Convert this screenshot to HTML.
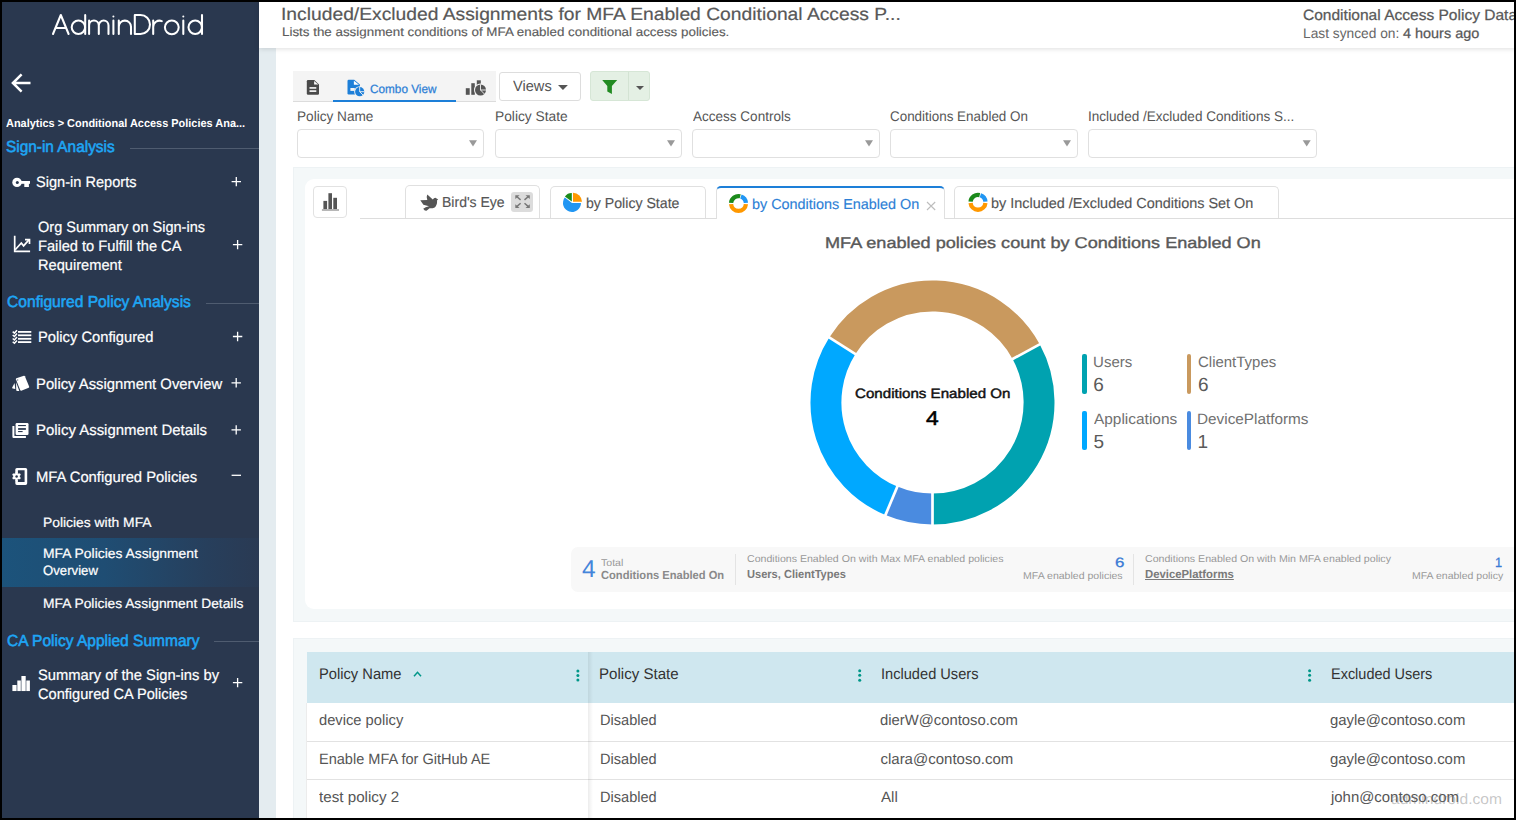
<!DOCTYPE html>
<html><head><meta charset="utf-8"><title>AdminDroid</title>
<style>
html,body{margin:0;padding:0;background:#fff;}
body{width:1516px;height:820px;overflow:hidden;font-family:"Liberation Sans",sans-serif;}
#page{position:relative;width:1516px;height:820px;overflow:hidden;background:#fff;}
#page>div,#page>svg{position:absolute;}
.frame{background:#000;z-index:20;}
.sel{top:129px;height:29px;border:1px solid #e0e0e0;border-radius:4px;box-sizing:border-box;background:#fff;}
.tab{top:186px;height:32px;border:1px solid #e0e0e0;border-bottom:none;border-radius:5px 5px 0 0;box-sizing:border-box;background:#fff;}

.t{position:absolute;white-space:pre;font-family:"Liberation Sans", sans-serif;line-height:30px;text-rendering:geometricPrecision;transform-origin:0 0;z-index:5;}
</style></head>
<body>
<div id="page">
<!-- sidebar -->
<div style="left:0;top:0;width:259px;height:820px;background:#2a384f;"></div>
<div style="left:2px;top:538px;width:257px;height:49px;background:linear-gradient(90deg,#1c537b 0%,#1f4d73 40%,#273f5c 80%,#2a3a53 100%);"></div>
<div style="left:130px;top:148px;width:129px;height:1px;background:#4f5c70;"></div>
<div style="left:206px;top:303px;width:53px;height:1px;background:#4f5c70;"></div>
<div style="left:214px;top:641px;width:45px;height:1px;background:#4f5c70;"></div>
<!-- gutter + header -->
<div style="left:259px;top:48px;width:17px;height:772px;background:#e4ecf0;"></div>
<div style="left:259px;top:0;width:1257px;height:48px;background:#fff;box-shadow:0 1px 5px rgba(0,0,0,.13);z-index:3;"></div>
<!-- toolbar -->
<div style="left:293px;top:71px;width:203px;height:31px;background:#f4f4f4;border-bottom:1px solid #dcdcdc;box-sizing:border-box;"></div>
<div style="left:333px;top:100px;width:123px;height:2px;background:#1d7fd8;"></div>
<div style="left:499px;top:72px;width:82px;height:29px;background:#fff;border:1px solid #ddd;border-radius:3px;box-sizing:border-box;"></div>
<div style="left:590px;top:71px;width:60px;height:30px;background:#e4f0e4;border:1px solid #d6e6d6;border-radius:3px;box-sizing:border-box;"></div>
<div style="left:628px;top:72px;width:1px;height:28px;background:#d3e3d3;"></div>
<!-- selects -->
<div class="sel" style="left:297px;width:187px;"></div>
<div class="sel" style="left:494.5px;width:187px;"></div>
<div class="sel" style="left:692px;width:188px;"></div>
<div class="sel" style="left:890px;width:188px;"></div>
<div class="sel" style="left:1088px;width:228.5px;"></div>
<!-- chart panel -->
<div style="left:293px;top:167px;width:1230px;height:455px;background:#f4f8f9;border:1px solid #edf2f4;box-sizing:border-box;"></div>
<div style="left:305px;top:178.5px;width:1220px;height:430px;background:#fff;border-radius:9px;"></div>
<div style="left:313px;top:186px;width:34px;height:32px;border:1px solid #e2e2e2;border-radius:4px;box-sizing:border-box;background:#fff;"></div>
<div style="left:360px;top:218px;width:1160px;height:1px;background:#ddd;"></div>
<div class="tab" style="left:405px;top:185px;width:135px;height:33px;"></div>
<div class="tab" style="left:549.5px;width:156.5px;"></div>
<div class="tab" style="left:954px;width:325px;"></div>
<div class="tab" style="left:715.5px;width:229px;height:33px;border-top:2px solid #1d7fd8;"></div>
<div style="left:511.3px;top:192.3px;width:21.4px;height:19.4px;background:#dcdcdc;border-radius:3px;"></div>
<!-- summary strip -->
<div style="left:571px;top:547px;width:960px;height:45px;background:#f8f8f8;border-radius:7px;"></div>
<div style="left:735px;top:554px;width:1px;height:31px;background:#e4e4e4;"></div>
<div style="left:1133px;top:554px;width:1px;height:31px;background:#e4e4e4;"></div>
<!-- table panel -->
<div style="left:293px;top:638px;width:1230px;height:200px;background:#f4f8f9;border:1px solid #edf2f4;box-sizing:border-box;"></div>
<div style="left:306.5px;top:652px;width:1215px;height:170px;background:#fff;"></div>
<div style="left:306.5px;top:652px;width:1215px;height:51px;background:#cfe7ef;"></div>
<div style="left:306.5px;top:741px;width:1215px;height:1px;background:#e2e2e2;"></div>
<div style="left:306.5px;top:779px;width:1215px;height:1px;background:#e2e2e2;"></div>
<div style="left:588px;top:652px;width:5px;height:170px;background:linear-gradient(90deg,rgba(0,0,0,.075),rgba(0,0,0,0));"></div>
<div style="left:306px;top:703px;width:1px;height:120px;background:#ececec;"></div>
<svg width="1516" height="820" viewBox="0 0 1516 820" style="left:0;top:0;z-index:4;pointer-events:none">
<path d="M1026.14,351.66 A106.55,106.55 0 0 1 932.50,509.05" stroke="#00a2b0" stroke-width="30.90" fill="none"/>
<path d="M842.34,345.72 A106.55,106.55 0 0 1 1026.14,351.66" stroke="#c9995e" stroke-width="30.90" fill="none"/>
<path d="M891.38,500.80 A106.55,106.55 0 0 1 842.34,345.72" stroke="#00a8ff" stroke-width="30.90" fill="none"/>
<path d="M932.50,509.05 A106.55,106.55 0 0 1 891.38,500.80" stroke="#4a8be0" stroke-width="30.90" fill="none"/>
<line x1="932.50" y1="491.60" x2="932.50" y2="526.50" stroke="#fff" stroke-width="2.7"/>
<line x1="1010.80" y1="359.99" x2="1041.47" y2="343.33" stroke="#fff" stroke-width="2.7"/>
<line x1="857.10" y1="355.02" x2="827.57" y2="336.42" stroke="#fff" stroke-width="2.7"/>
<line x1="898.12" y1="484.70" x2="884.65" y2="516.89" stroke="#fff" stroke-width="2.7"/>
<rect x="1082" y="354" width="5" height="40" rx="2" fill="#00a2b0"/>
<rect x="1187" y="354" width="4" height="40" rx="2" fill="#c9995e"/>
<rect x="1082" y="411" width="5" height="39" rx="2" fill="#00a8ff"/>
<rect x="1187" y="411" width="4" height="39" rx="2" fill="#4a8be0"/>
<!--ICONS-->
<!-- logo -->
<g fill="none" stroke="#fff" stroke-width="2.05" stroke-linecap="round" stroke-linejoin="round">
<path d="M53,34 L60.8,15 L68.6,34 M56.2,28 H65.4"/>
<circle cx="78.4" cy="27.3" r="6.7"/><path d="M85.2,15 V34"/>
<path d="M89.1,20.6 V34 M89.1,25.4 a4.85,4.85 0 0 1 9.7,0 V34 M98.8,25.4 a4.85,4.85 0 0 1 9.7,0 V34"/>
<path d="M113.4,20.6 V34 M113.4,16.4 v0.1"/>
<path d="M118.8,20.6 V34 M118.8,26.7 a6.1,6.1 0 0 1 12.2,0 V34"/>
<path d="M134.8,15 V34 M134.8,15 H140.5 a9.5,9.5 0 0 1 0,19 H134.8"/>
<path d="M153.2,20.6 V34 M153.2,27 a6.3,6.3 0 0 1 8.6,-5.9"/>
<circle cx="171.8" cy="27.3" r="6.9"/>
<path d="M183.3,20.6 V34 M183.3,16.4 v0.1"/>
<circle cx="195.2" cy="27.3" r="6.7"/><path d="M202,15 V34"/>
</g>
<!-- back arrow -->
<path d="M30.5,83 H13.2 M21.6,74.3 L12.9,83 L21.6,91.7" fill="none" stroke="#fff" stroke-width="2.5"/>
<!-- key -->
<g fill="#fff"><circle cx="17" cy="182.4" r="4.7"/><rect x="20" y="181" width="10" height="2.8"/><rect x="24.3" y="183" width="4.6" height="4"/></g>
<circle cx="17.3" cy="182.4" r="1.5" fill="#2a384f"/>
<!-- chart-line -->
<g fill="none" stroke="#fff" stroke-width="1.7"><path d="M14.7,235.8 V251.3 H30.1"/><path d="M15.2,249.8 L21.3,243 L23.6,245.9 L28.9,239.9"/><path d="M25,239.7 H29.5 V244"/></g>
<!-- tasks list -->
<g fill="#fff"><rect x="18" y="331" width="13.3" height="1.8"/><rect x="18" y="334.4" width="13.3" height="1.8"/><rect x="18" y="337.9" width="13.3" height="1.8"/><rect x="18" y="341.2" width="13.3" height="1.8"/></g>
<g fill="none" stroke="#fff" stroke-width="1.5"><path d="M12.7,331.6 L14.4,333.1 L17,330.2"/><path d="M12.7,335 L14.4,336.5 L17,333.6"/><path d="M12.7,338.5 L14.4,340 L17,337.1"/><path d="M12.7,341.8 L14.4,343.3 L17,340.4"/></g>
<!-- style cards -->
<g fill="#fff"><path d="M16.4,378.2 L23.9,375.8 Q24.6,375.6 24.9,376.3 L29.2,386.8 Q29.4,387.5 28.7,387.8 L21.3,390.7 Q20.6,390.9 20.3,390.3 L15.9,379.3 Q15.7,378.5 16.4,378.2 Z"/><path d="M16.1,382.2 L19.3,390.9 L17.2,390.9 Q16.3,390.8 16.2,389.9 Z"/><path d="M14.6,383 L15.3,388.9 L12.6,388.6 Q12,388.3 12.2,387.6 Z"/></g>
<circle cx="17.6" cy="380.1" r="0.75" fill="#2a384f" opacity=".6"/>
<!-- library books -->
<g fill="#fff"><rect x="15.6" y="423" width="12.9" height="12" rx="1.2"/><path d="M12.4,426 H14.4 V436 H25.9 V438 H13.6 Q12.4,438 12.4,436.8 Z"/></g>
<g fill="#2a384f"><rect x="18.1" y="425" width="7.8" height="1.1"/><rect x="18.1" y="428.1" width="7.8" height="1.75"/><rect x="18.1" y="431" width="4.5" height="1.1"/></g>
<!-- phone setup -->
<path d="M15.3,473 V469.6 Q15.3,468 16.9,468 H25.6 Q27.2,468 27.2,469.6 V483.3 Q27.2,484.9 25.6,484.9 H16.9 Q15.3,484.9 15.3,483.3 V480 H17.9 V481.9 H24.6 V470.2 H17.9 V473 Z" fill="#fff"/>
<g fill="#fff"><circle cx="16.5" cy="476.4" r="3.3"/><g stroke="#fff" stroke-width="1.9"><path d="M16.5,471.9 V480.9"/><path d="M12.6,474.15 L20.4,478.65"/><path d="M12.6,478.65 L20.4,474.15"/></g></g>
<circle cx="16.6" cy="476.4" r="1.25" fill="#2a384f"/>
<!-- bars -->
<g fill="#fff"><rect x="12.4" y="685" width="4.2" height="6.05"/><rect x="17.3" y="680.5" width="3.5" height="10.55"/><rect x="21.4" y="676" width="4.3" height="15.05"/><rect x="26.3" y="680.5" width="3.6" height="10.55"/></g>
<!-- plus / minus -->
<g stroke="#fff" stroke-width="1.3" fill="none">
<path d="M231.6,181.6 H241 M236.3,176.9 V186.3"/>
<path d="M232.9,244.6 H242.3 M237.6,239.9 V249.3"/>
<path d="M232.9,336.5 H242.3 M237.6,331.8 V341.2"/>
<path d="M231.5,382.8 H240.9 M236.2,378.1 V387.5"/>
<path d="M231.5,429.9 H240.9 M236.2,425.2 V434.6"/>
<path d="M231.6,475.3 H241"/>
<path d="M232.9,682.6 H242.3 M237.6,677.9 V687.3"/>
</g>
<!-- doc icon -->
<path d="M308,80 H314.3 L319,84.4 V93.6 Q319,94.8 317.8,94.8 H308 Q306.8,94.8 306.8,93.6 V81.2 Q306.8,80 308,80 Z" fill="#4a4a4a"/>
<path d="M314.1,80.9 V84.6 H318.2 Z" fill="#fff"/>
<rect x="309.5" y="87.15" width="6.8" height="1.55" fill="#fff"/><rect x="309.5" y="90.3" width="6.8" height="1.6" fill="#fff"/>
<!-- combo icon -->
<path d="M348.7,79.8 H354.2 L359.9,84.4 V93.3 Q359.9,94.5 358.7,94.5 H348.7 Q347.5,94.5 347.5,93.3 V81 Q347.5,79.8 348.7,79.8 Z" fill="#1d7fd8"/>
<path d="M353.9,80.7 V84.7 H359 Z" fill="#fff"/>
<rect x="350.4" y="88" width="4.4" height="2.9" fill="#f4f4f4"/>
<circle cx="359.7" cy="91.7" r="5.5" fill="#f4f4f4"/>
<circle cx="359.7" cy="91.7" r="4.6" fill="#1d7fd8"/>
<g stroke="#f4f4f4" stroke-width="0.9"><path d="M359.7,91.7 V87"/><path d="M359.7,91.7 H364.4"/><path d="M359.7,91.7 L363,95"/></g>
<!-- bar+pie icon -->
<g fill="#555"><rect x="465.8" y="88.2" width="3.9" height="6.6"/><rect x="471.3" y="83.2" width="3.5" height="11.6"/><rect x="476.8" y="80.3" width="4" height="6"/></g>
<circle cx="480.5" cy="90" r="6.5" fill="#f4f4f4"/><circle cx="480.5" cy="90" r="5.5" fill="#555"/>
<g stroke="#f4f4f4" stroke-width="0.9"><path d="M480.5,90 V84.4"/><path d="M480.5,90 H486.1"/><path d="M480.5,90 L484.4,94"/></g>
<!-- views caret, filter -->
<path d="M558,85.1 H567.9 L562.95,89.9 Z" fill="#555"/>
<path d="M602.2,80 H617.2 L611.9,86 V94 L607.3,91.5 V86 Z" fill="#228b22"/>
<path d="M636,86 H644 L640,89.9 Z" fill="#555"/>
<!-- select arrows -->
<g fill="#999"><path d="M469,140.2 H477 L473,146.4 Z"/><path d="M667,140.2 H675 L671,146.4 Z"/><path d="M865,140.2 H873 L869,146.4 Z"/><path d="M1063,140.2 H1071 L1067,146.4 Z"/><path d="M1302.7,140.2 H1310.7 L1306.7,146.4 Z"/></g>
<!-- chart type button bars -->
<g fill="#555"><rect x="323.4" y="200.9" width="3.7" height="8.2"/><rect x="328.4" y="193.2" width="3.6" height="15.9"/><rect x="333.3" y="197.8" width="3.7" height="11.3"/></g>
<rect x="321.9" y="209.3" width="17.1" height="1.4" fill="#999"/>
<!-- dove -->
<path d="M427.3,194.4 L432.8,199.6 Q434,197.6 435.8,197.9 L438.2,199.5 L437.1,200.2 Q437.3,205 434.7,207.5 Q432,208.6 429.6,208.3 L426.5,210.8 L424.8,210.6 L423.2,208.7 L425.7,207.3 L429,206.3 L423.4,204.7 L420.3,200.3 L427.3,199.9 Q426,197 427.3,194.4 Z" fill="#555"/>
<!-- expand arrows -->
<g fill="#777" stroke="#777" stroke-width="1.5"><path d="M516.4,196.3 L520.6,199.9" /><path d="M528.7,196.3 L524.5,199.9"/><path d="M516.4,206.9 L520.6,203.3"/><path d="M528.7,206.9 L524.5,203.3"/></g>
<g fill="#777"><path d="M515.3,195.2 H519.6 L515.3,199 Z"/><path d="M529.8,195.2 H525.5 L529.8,199 Z"/><path d="M515.3,208 H519.6 L515.3,204.2 Z"/><path d="M529.8,208 H525.5 L529.8,204.2 Z"/></g>
<!-- pie icon -->
<path d="M572,203 H581 A9,9 0 1 1 564.8,197.6 Z" fill="#2196f3"/>
<path d="M573,201.8 V192.8 A9,9 0 0 1 582,201.8 Z" fill="#ff9800"/>
<path d="M571.8,201.6 L564.9,196.4 A8.6,8.6 0 0 1 571.8,193 Z" fill="#1b8a1b"/>
<!-- donut icons -->
<g fill="none" stroke-width="4.3">
<path d="M731.08,202.85 A7.45,7.45 0 0 1 740.2,196.25" stroke="#1b8a1b"/>
<path d="M740.9,196.45 A7.45,7.45 0 0 1 745.92,202.85" stroke="#2196f3"/>
<path d="M745.92,204.15 A7.45,7.45 0 0 1 731.08,204.15" stroke="#ff9800"/>
</g>
<g fill="none" stroke-width="4.3" transform="translate(239.5,-1.2)">
<path d="M731.08,202.85 A7.45,7.45 0 0 1 740.2,196.25" stroke="#1b8a1b"/>
<path d="M740.9,196.45 A7.45,7.45 0 0 1 745.92,202.85" stroke="#2196f3"/>
<path d="M745.92,204.15 A7.45,7.45 0 0 1 731.08,204.15" stroke="#ff9800"/>
</g>
<!-- tab close x -->
<path d="M927,202 L935.2,210 M935.2,202 L927,210" stroke="#bdbdbd" stroke-width="1.1" fill="none"/>
<!-- table icons -->
<path d="M414,676.3 L417.5,672.3 L421,676.3" stroke="#009688" stroke-width="1.5" fill="none"/>
<g fill="#009688">
<circle cx="577.9" cy="671.1" r="1.5"/><circle cx="577.9" cy="675.6" r="1.5"/><circle cx="577.9" cy="680.1" r="1.5"/>
<circle cx="859.7" cy="670.7" r="1.5"/><circle cx="859.7" cy="675.3" r="1.5"/><circle cx="859.7" cy="680.2" r="1.5"/>
<circle cx="1309.6" cy="670.7" r="1.5"/><circle cx="1309.6" cy="675.3" r="1.5"/><circle cx="1309.6" cy="680.2" r="1.5"/>
</g>
<!--/ICONS-->
</svg>

<span class="t" style="left:6.20px;top:109px;font-size:11.5px;font-weight:700;color:#ffffff;transform:scaleX(0.9515);">Analytics &gt; Conditional Access Policies Ana...</span>
<span class="t" style="left:6.30px;top:133px;font-size:16px;font-weight:400;color:#1ea6f5;-webkit-text-stroke:0.55px #1ea6f5;transform:scaleX(0.9623);">Sign-in Analysis</span>
<span class="t" style="left:36.40px;top:168px;font-size:15px;font-weight:400;color:#ffffff;-webkit-text-stroke:0.2px #ffffff;transform:scaleX(0.9720);">Sign-in Reports</span>
<span class="t" style="left:38.00px;top:213px;font-size:15px;font-weight:400;color:#ffffff;-webkit-text-stroke:0.2px #ffffff;transform:scaleX(0.9678);">Org Summary on Sign-ins</span>
<span class="t" style="left:38.00px;top:232px;font-size:15px;font-weight:400;color:#ffffff;-webkit-text-stroke:0.2px #ffffff;transform:scaleX(0.9780);">Failed to Fulfill the CA</span>
<span class="t" style="left:38.00px;top:251px;font-size:15px;font-weight:400;color:#ffffff;-webkit-text-stroke:0.2px #ffffff;transform:scaleX(0.9757);">Requirement</span>
<span class="t" style="left:6.50px;top:288px;font-size:16px;font-weight:400;color:#1ea6f5;-webkit-text-stroke:0.55px #1ea6f5;transform:scaleX(0.9754);">Configured Policy Analysis</span>
<span class="t" style="left:38.00px;top:323px;font-size:15px;font-weight:400;color:#ffffff;-webkit-text-stroke:0.2px #ffffff;transform:scaleX(0.9825);">Policy Configured</span>
<span class="t" style="left:36.40px;top:370px;font-size:15px;font-weight:400;color:#ffffff;-webkit-text-stroke:0.2px #ffffff;transform:scaleX(0.9878);">Policy Assignment Overview</span>
<span class="t" style="left:36.40px;top:416px;font-size:15px;font-weight:400;color:#ffffff;-webkit-text-stroke:0.2px #ffffff;transform:scaleX(0.9962);">Policy Assignment Details</span>
<span class="t" style="left:36.40px;top:463px;font-size:15px;font-weight:400;color:#ffffff;-webkit-text-stroke:0.2px #ffffff;transform:scaleX(0.9864);">MFA Configured Policies</span>
<span class="t" style="left:43.20px;top:508px;font-size:13.5px;font-weight:400;color:#ffffff;-webkit-text-stroke:0.2px #ffffff;transform:scaleX(1.0266);">Policies with MFA</span>
<span class="t" style="left:43.20px;top:539px;font-size:13.5px;font-weight:400;color:#ffffff;-webkit-text-stroke:0.2px #ffffff;transform:scaleX(1.0270);">MFA Policies Assignment</span>
<span class="t" style="left:43.20px;top:556px;font-size:13.5px;font-weight:400;color:#ffffff;-webkit-text-stroke:0.2px #ffffff;transform:scaleX(0.9757);">Overview</span>
<span class="t" style="left:43.20px;top:589px;font-size:13.5px;font-weight:400;color:#ffffff;-webkit-text-stroke:0.2px #ffffff;transform:scaleX(1.0233);">MFA Policies Assignment Details</span>
<span class="t" style="left:6.50px;top:627px;font-size:16px;font-weight:400;color:#1ea6f5;-webkit-text-stroke:0.55px #1ea6f5;transform:scaleX(0.9707);">CA Policy Applied Summary</span>
<span class="t" style="left:38.00px;top:661px;font-size:15px;font-weight:400;color:#ffffff;-webkit-text-stroke:0.2px #ffffff;transform:scaleX(0.9824);">Summary of the Sign-ins by</span>
<span class="t" style="left:38.00px;top:680px;font-size:15px;font-weight:400;color:#ffffff;-webkit-text-stroke:0.2px #ffffff;transform:scaleX(0.9731);">Configured CA Policies</span>
<span class="t" style="left:281.22px;top:-1px;font-size:17.6px;font-weight:400;color:#585858;-webkit-text-stroke:0.2px #585858;transform:scaleX(1.0951);">Included/Excluded Assignments for MFA Enabled Conditional Access P...</span>
<span class="t" style="left:281.50px;top:17px;font-size:12.2px;font-weight:400;color:#5c5c5c;-webkit-text-stroke:0.15px #5c5c5c;transform:scaleX(1.0968);">Lists the assignment conditions of MFA enabled conditional access policies.</span>
<span class="t" style="left:1303.41px;top:1px;font-size:15px;font-weight:400;color:#585858;-webkit-text-stroke:0.25px #585858;transform:scaleX(1.0351);">Conditional Access Policy Data</span>
<span class="t" style="left:1303.47px;top:18px;font-size:14px;font-weight:400;color:#666666;transform:scaleX(0.9819);">Last synced on:</span>
<span class="t" style="left:1403.37px;top:18px;font-size:14px;font-weight:400;color:#585858;-webkit-text-stroke:0.25px #585858;transform:scaleX(1.0309);">4 hours ago</span>
<span class="t" style="left:369.60px;top:74px;font-size:12px;font-weight:400;color:#2d7fd6;-webkit-text-stroke:0.25px #2d7fd6;transform:scaleX(0.9802);">Combo View</span>
<span class="t" style="left:513.04px;top:72px;font-size:15px;font-weight:400;color:#555555;transform:scaleX(0.9734);">Views</span>
<span class="t" style="left:296.88px;top:101px;font-size:14px;font-weight:400;color:#555555;transform:scaleX(0.9724);">Policy Name</span>
<span class="t" style="left:494.87px;top:101px;font-size:14px;font-weight:400;color:#555555;transform:scaleX(0.9838);">Policy State</span>
<span class="t" style="left:693.37px;top:101px;font-size:14px;font-weight:400;color:#555555;transform:scaleX(0.9660);">Access Controls</span>
<span class="t" style="left:890.42px;top:101px;font-size:14px;font-weight:400;color:#555555;transform:scaleX(0.9580);">Conditions Enabled On</span>
<span class="t" style="left:1088.15px;top:101px;font-size:14px;font-weight:400;color:#555555;transform:scaleX(0.9673);">Included /Excluded Conditions S...</span>
<span class="t" style="left:442.35px;top:188px;font-size:14.5px;font-weight:400;color:#555555;-webkit-text-stroke:0.15px #555555;transform:scaleX(0.9668);">Bird&#x27;s Eye</span>
<span class="t" style="left:585.99px;top:189px;font-size:14.5px;font-weight:400;color:#555555;-webkit-text-stroke:0.15px #555555;transform:scaleX(0.9741);">by Policy State</span>
<span class="t" style="left:752.27px;top:190px;font-size:14.5px;font-weight:400;color:#2d7fd6;-webkit-text-stroke:0.15px #2d7fd6;transform:scaleX(0.9927);">by Conditions Enabled On</span>
<span class="t" style="left:991.27px;top:189px;font-size:14.5px;font-weight:400;color:#555555;-webkit-text-stroke:0.15px #555555;transform:scaleX(0.9954);">by Included /Excluded Conditions Set On</span>
<span class="t" style="left:825.22px;top:229px;font-size:15.5px;font-weight:400;color:#595959;-webkit-text-stroke:0.38px #595959;transform:scaleX(1.1679);">MFA enabled policies count by Conditions Enabled On</span>
<span class="t" style="left:854.83px;top:379px;font-size:13.5px;font-weight:400;color:#111;-webkit-text-stroke:0.45px #111;transform:scaleX(1.1196);">Conditions Enabled On</span>
<span class="t" style="left:926.08px;top:404px;font-size:20px;font-weight:400;color:#000;-webkit-text-stroke:0.5px #000;transform:scaleX(1.1409);">4</span>
<span class="t" style="left:1093.05px;top:348px;font-size:15px;font-weight:400;color:#707070;">Users</span>
<span class="t" style="left:1093.34px;top:371px;font-size:19px;font-weight:400;color:#5a5a5a;">6</span>
<span class="t" style="left:1197.64px;top:348px;font-size:15px;font-weight:400;color:#707070;transform:scaleX(0.9978);">ClientTypes</span>
<span class="t" style="left:1197.94px;top:371px;font-size:19px;font-weight:400;color:#5a5a5a;">6</span>
<span class="t" style="left:1093.67px;top:405px;font-size:15px;font-weight:400;color:#707070;transform:scaleX(1.0284);">Applications</span>
<span class="t" style="left:1093.54px;top:428px;font-size:19px;font-weight:400;color:#5a5a5a;">5</span>
<span class="t" style="left:1197.14px;top:405px;font-size:15px;font-weight:400;color:#707070;transform:scaleX(1.0211);">DevicePlatforms</span>
<span class="t" style="left:1197.45px;top:428px;font-size:19px;font-weight:400;color:#5a5a5a;">1</span>
<span class="t" style="left:581.74px;top:555px;font-size:24.5px;font-weight:400;color:#4585da;transform:scaleX(1.0032);">4</span>
<span class="t" style="left:601.06px;top:549px;font-size:10px;font-weight:400;color:#999999;transform:scaleX(1.0578);">Total</span>
<span class="t" style="left:600.84px;top:561px;font-size:11.7px;font-weight:700;color:#8a8a8a;transform:scaleX(0.9530);">Conditions Enabled On</span>
<span class="t" style="left:746.96px;top:545px;font-size:10px;font-weight:400;color:#999999;transform:scaleX(1.0580);">Conditions Enabled On with Max MFA enabled policies</span>
<span class="t" style="left:747.23px;top:560px;font-size:11.7px;font-weight:700;color:#7a7a7a;transform:scaleX(0.9469);">Users, ClientTypes</span>
<span class="t" style="left:1114.54px;top:548px;font-size:13.5px;font-weight:400;color:#3a7bd5;-webkit-text-stroke:0.3px #3a7bd5;transform:scaleX(1.2506);">6</span>
<span class="t" style="left:1023.14px;top:562px;font-size:10px;font-weight:400;color:#999999;transform:scaleX(1.0543);">MFA enabled policies</span>
<span class="t" style="left:1145.36px;top:545px;font-size:10px;font-weight:400;color:#999999;transform:scaleX(1.0611);">Conditions Enabled On with Min MFA enabled policy</span>
<span class="t" style="left:1145.14px;top:560px;font-size:11.7px;font-weight:700;color:#7a7a7a;text-decoration:underline;transform:scaleX(0.9696);">DevicePlatforms</span>
<span class="t" style="left:1495.13px;top:548px;font-size:13.5px;font-weight:400;color:#3a7bd5;-webkit-text-stroke:0.3px #3a7bd5;transform:scaleX(0.9437);">1</span>
<span class="t" style="left:1411.94px;top:562px;font-size:10px;font-weight:400;color:#999999;transform:scaleX(1.0515);">MFA enabled policy</span>
<span class="t" style="left:319.39px;top:660px;font-size:15.4px;font-weight:400;color:#333333;transform:scaleX(0.9545);">Policy Name</span>
<span class="t" style="left:599.26px;top:660px;font-size:15.4px;font-weight:400;color:#333333;transform:scaleX(0.9807);">Policy State</span>
<span class="t" style="left:880.65px;top:660px;font-size:15.4px;font-weight:400;color:#333333;transform:scaleX(0.9496);">Included Users</span>
<span class="t" style="left:1330.81px;top:660px;font-size:15.4px;font-weight:400;color:#333333;transform:scaleX(0.9400);">Excluded Users</span>
<span class="t" style="left:319.28px;top:706px;font-size:15px;font-weight:400;color:#555555;transform:scaleX(0.9809);">device policy</span>
<span class="t" style="left:599.50px;top:706px;font-size:15px;font-weight:400;color:#555555;transform:scaleX(0.9719);">Disabled</span>
<span class="t" style="left:880.48px;top:706px;font-size:15px;font-weight:400;color:#555555;transform:scaleX(0.9881);">dierW@contoso.com</span>
<span class="t" style="left:1330.47px;top:706px;font-size:15px;font-weight:400;color:#555555;transform:scaleX(0.9939);">gayle@contoso.com</span>
<span class="t" style="left:319.41px;top:745px;font-size:15px;font-weight:400;color:#555555;transform:scaleX(0.9692);">Enable MFA for GitHub AE</span>
<span class="t" style="left:599.50px;top:745px;font-size:15px;font-weight:400;color:#555555;transform:scaleX(0.9719);">Disabled</span>
<span class="t" style="left:880.46px;top:745px;font-size:15px;font-weight:400;color:#555555;">clara@contoso.com</span>
<span class="t" style="left:1330.47px;top:745px;font-size:15px;font-weight:400;color:#555555;transform:scaleX(0.9939);">gayle@contoso.com</span>
<span class="t" style="left:319.47px;top:783px;font-size:15px;font-weight:400;color:#555555;transform:scaleX(1.0123);">test policy 2</span>
<span class="t" style="left:599.50px;top:783px;font-size:15px;font-weight:400;color:#555555;transform:scaleX(0.9719);">Disabled</span>
<span class="t" style="left:880.87px;top:783px;font-size:15px;font-weight:400;color:#555555;transform:scaleX(1.0103);">All</span>
<span class="t" style="left:1330.96px;top:783px;font-size:15px;font-weight:400;color:#555555;transform:scaleX(0.9944);">john@contoso.com</span>
<span class="t" style="left:1391.34px;top:785px;font-size:14.8px;font-weight:400;color:rgba(120,120,120,0.42);z-index:6;transform:scaleX(1.0542);">admindroid.com</span>
<div class="frame" style="left:0;top:0;width:1516px;height:2px"></div>
<div class="frame" style="left:0;top:818px;width:1516px;height:2px"></div>
<div class="frame" style="left:0;top:0;width:2px;height:820px"></div>
<div class="frame" style="left:1514px;top:0;width:2px;height:820px"></div>
</div>
</body></html>
